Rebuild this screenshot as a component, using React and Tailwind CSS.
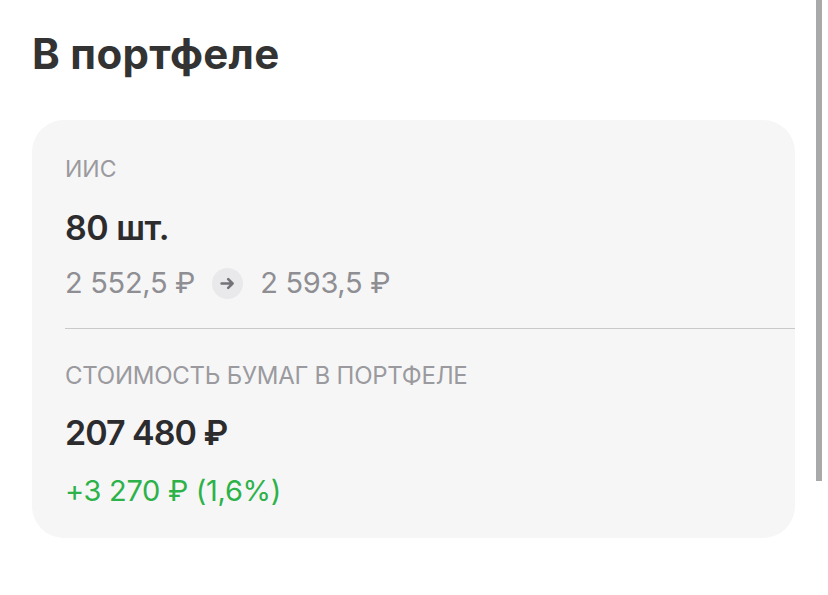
import React from 'react';

function ArrowBadge() {
  return (
    <span className="mx-[17px] flex h-[31px] w-[31px] items-center justify-center rounded-full bg-[#e9e9eb]">
      <svg width="15" height="13" viewBox="0 0 15 13" fill="none">
        <path d="M1.6 6.5h11M8.2 2.1l4.4 4.4-4.4 4.4" stroke="#737378" strokeWidth="2.6" strokeLinecap="round" strokeLinejoin="round" />
      </svg>
    </span>
  );
}

export default function App() {
  return (
    <div className="relative h-[595px] w-[828px] overflow-hidden bg-white font-['Inter',sans-serif]">
      <div className="pl-[32px] pt-[29px]">
        <h1 className="text-[42px] font-bold leading-[50px] tracking-[0.3px] text-[#333333]">В портфеле</h1>

        <div className="mt-[41px] w-[763px] rounded-[32px] bg-[#f6f6f6] pb-[29px] pl-[33px] pt-[35px]">
          <div className="text-[23px] leading-[28px] text-[#9a9a9f]">ИИС</div>
          <div className="mt-[25px] text-[34px] font-semibold leading-[40px] tracking-[-0.5px] text-[#2c2c2e]">80 шт.</div>
          <div className="mt-[17px] flex items-center text-[29px] leading-[36px] tracking-[-0.3px] text-[#8e8e93]">
            <span>2 552,5 ₽</span>
            <ArrowBadge />
            <span>2 593,5 ₽</span>
          </div>

          <div className="mt-[27px] h-px bg-[#c9c9cc]" />

          <div className="mt-[33px] text-[24px] leading-[28px] tracking-[-0.25px] text-[#9a9a9f]">СТОИМОСТЬ БУМАГ В ПОРТФЕЛЕ</div>
          <div className="mt-[23px] text-[34px] font-semibold leading-[40px] tracking-[-1px] text-[#2c2c2e]">207 480 ₽</div>
          <div className="mt-[20px] text-[29px] leading-[36px] tracking-[-0.3px] text-[#2db24a]">+3 270 ₽ (1,6%)</div>
        </div>
      </div>

      <div className="absolute right-[6px] top-0 h-[481px] w-[6px] bg-[#a9a9a9]" />
    </div>
  );
}
